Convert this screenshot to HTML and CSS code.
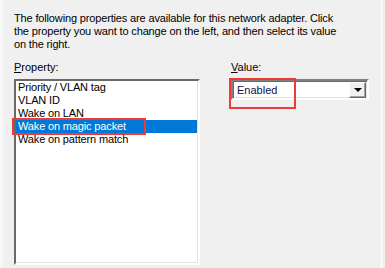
FILE: index.html
```html
<!DOCTYPE html>
<html lang="en">
<head>
    <meta charset="UTF-8">
    <meta name="viewport" content="width=device-width, initial-scale=1.0">
    <title>Advanced</title>
    <link rel="stylesheet" href="styles.css">
</head>
<body>
    <div class="page">
        <p class="intro">The following properties are available for this network adapter. Click<br>
            the property you want to change on the left, and then select its value<br>
            on the right.</p>

        <div class="fields">
            <div class="property-col">
                <label class="field-label"><u>P</u>roperty:</label>
                <ul class="listbox">
                    <li>Priority / VLAN tag</li>
                    <li>VLAN ID</li>
                    <li>Wake on LAN</li>
                    <li class="selected">Wake on magic packet<span class="mark"></span></li>
                    <li>Wake on pattern match</li>
                </ul>
            </div>

            <div class="value-col">
                <label class="field-label"><u>V</u>alue:</label>
                <div class="combo">
                    <span class="combo-text">Enabled</span>
                    <span class="combo-btn"><span class="arrow"></span></span>
                    <span class="mark mark-combo"></span>
                </div>
            </div>
        </div>
    </div>
</body>
</html>
```

FILE: styles.css
```css
body {
    margin: 0;
    background-color: #f0f0f0;
    font-family: "Liberation Sans", Arial, sans-serif;
    font-size: 11px;
    color: #000;
}
.page {
    box-sizing: border-box;
    width: 382px;
    height: 268px;
    border-left: 3px solid #f7f7f7;
    border-right: 1px solid #fff;
    padding: 12px 0 0 11px;
}
.intro {
    margin: 0;
    line-height: 13px;
    letter-spacing: -0.15px;
    white-space: nowrap;
}
.fields {
    display: flex;
    gap: 31px;
    margin-top: 10px;
}
.field-label {
    display: block;
    line-height: 13px;
    margin-bottom: 5px;
}
.listbox {
    list-style: none;
    margin: 0;
    padding: 0;
    box-sizing: border-box;
    width: 186px;
    height: 186px;
    background-color: #fff;
    border-style: solid;
    border-width: 2px;
    border-color: #696969 #fff #fff #696969;
    box-shadow: inset -1px -1px 0 #e3e3e3;
}
.listbox li {
    line-height: 13px;
    padding-left: 2px;
    margin-right: 1px;
    letter-spacing: -0.15px;
}
.listbox li.selected {
    position: relative;
    background-color: #0078d7;
    color: #fff;
}
.mark {
    position: absolute;
    box-sizing: border-box;
    border: 2px solid #ef3a3a;
}
.selected .mark {
    left: -4px;
    top: -2px;
    width: 134px;
    height: 17px;
}
.combo {
    position: relative;
    box-sizing: border-box;
    width: 138px;
    height: 21px;
    display: flex;
    align-items: center;
    background-color: #fff;
    border-style: solid;
    border-width: 2px;
    border-color: #808080 #fff #fff #808080;
    box-shadow: inset 1px 1px 0 #696969, inset -1px -1px 0 #e3e3e3;
}
.combo-text {
    flex: 1;
    padding-left: 4px;
    color: #10104a;
}
.combo-btn {
    box-sizing: border-box;
    width: 17px;
    height: 16px;
    margin-right: 1px;
    display: flex;
    align-items: center;
    justify-content: center;
    background-color: #f0f0f0;
    border-style: solid;
    border-width: 1px;
    border-color: #fff #696969 #696969 #fff;
    box-shadow: inset -1px -1px 0 #a0a0a0;
}
.arrow {
    width: 0;
    height: 0;
    border-left: 4px solid transparent;
    border-right: 4px solid transparent;
    border-top: 4px solid #000;
}
.mark-combo {
    left: -4px;
    top: -3px;
    width: 67px;
    height: 31px;
}
```
